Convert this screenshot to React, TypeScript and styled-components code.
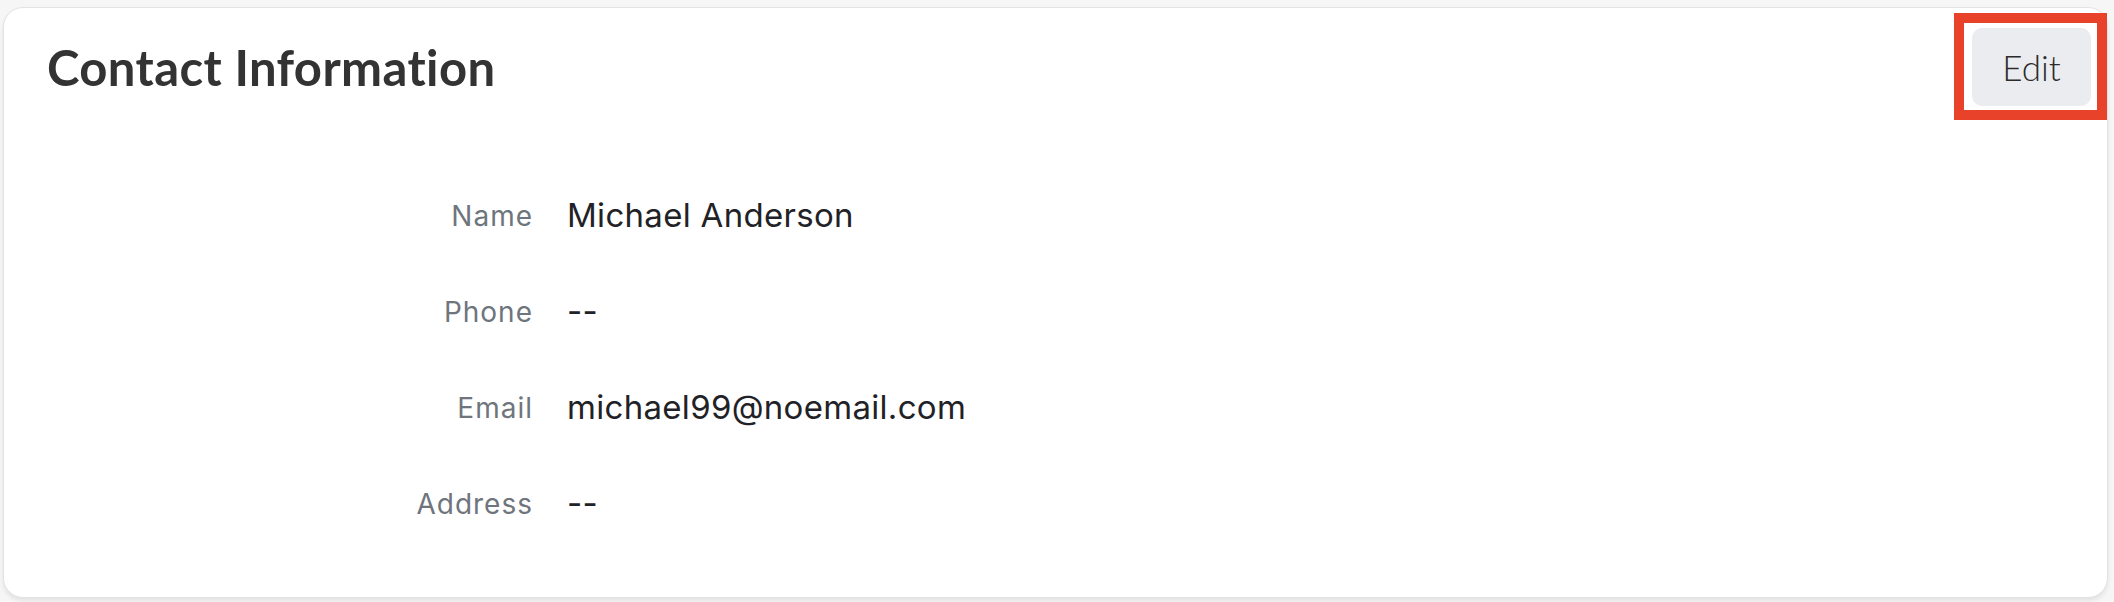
import React from 'react';
import styled, { createGlobalStyle } from 'styled-components';

const GlobalStyle = createGlobalStyle`
  html, body {
    margin: 0;
    padding: 0;
    background: #f6f6f7;
  }
  * {
    box-sizing: border-box;
  }
`;

const Page = styled.div`
  padding: 7px 6px 4px 3px;
  height: 602px;
`;

const Card = styled.section`
  height: 591px;
  background: #ffffff;
  border: 1px solid #e3e3e5;
  border-radius: 20px;
  box-shadow: 0 3px 4px rgba(0, 0, 0, 0.08);
`;

const Header = styled.header`
  display: flex;
  justify-content: space-between;
  align-items: center;
  padding: 20px 16px 0 43px;
`;

const Title = styled.h2`
  margin: 0;
  font-family: Lato, "Noto Sans", sans-serif;
  font-weight: 700;
  font-size: 49px;
  letter-spacing: 0.4px;
  font-variant-ligatures: none;
  color: #333333;
`;

const EditButton = styled.button`
  position: relative;
  width: 119px;
  height: 78px;
  border: none;
  border-radius: 10px;
  background: #ebecef;
  color: #2b2b2b;
  font-family: Lato, "Noto Sans", sans-serif;
  font-weight: 300;
  font-size: 35px;
  cursor: pointer;

  &::after {
    content: '';
    position: absolute;
    top: -15px;
    bottom: -14px;
    left: -18px;
    right: -16px;
    border: 10px solid #e8422b;
    pointer-events: none;
  }
`;

const Details = styled.dl`
  display: grid;
  grid-template-columns: 529px 1fr;
  column-gap: 34px;
  margin: 0;
  padding-top: 89px;
`;

const Label = styled.dt`
  text-align: right;
  font-family: Inter, "Noto Sans", sans-serif;
  font-size: 28px;
  letter-spacing: 1px;
  color: #6e757d;
  height: 96px;
  line-height: 42px;
`;

const Value = styled.dd`
  margin: 0;
  font-family: Inter, "Noto Sans", sans-serif;
  font-size: 33px;
  letter-spacing: 0.3px;
  color: #1f2226;
  height: 96px;
  line-height: 40px;
`;

const fields = [
  { label: 'Name', value: 'Michael Anderson' },
  { label: 'Phone', value: '--' },
  { label: 'Email', value: 'michael99@noemail.com' },
  { label: 'Address', value: '--' },
];

export default function App() {
  return (
    <Page>
      <GlobalStyle />
      <Card>
        <Header>
          <Title>Contact Information</Title>
          <EditButton>Edit</EditButton>
        </Header>
        <Details>
          {fields.map(f => (
            <React.Fragment key={f.label}>
              <Label>{f.label}</Label>
              <Value>{f.value}</Value>
            </React.Fragment>
          ))}
        </Details>
      </Card>
    </Page>
  );
}
